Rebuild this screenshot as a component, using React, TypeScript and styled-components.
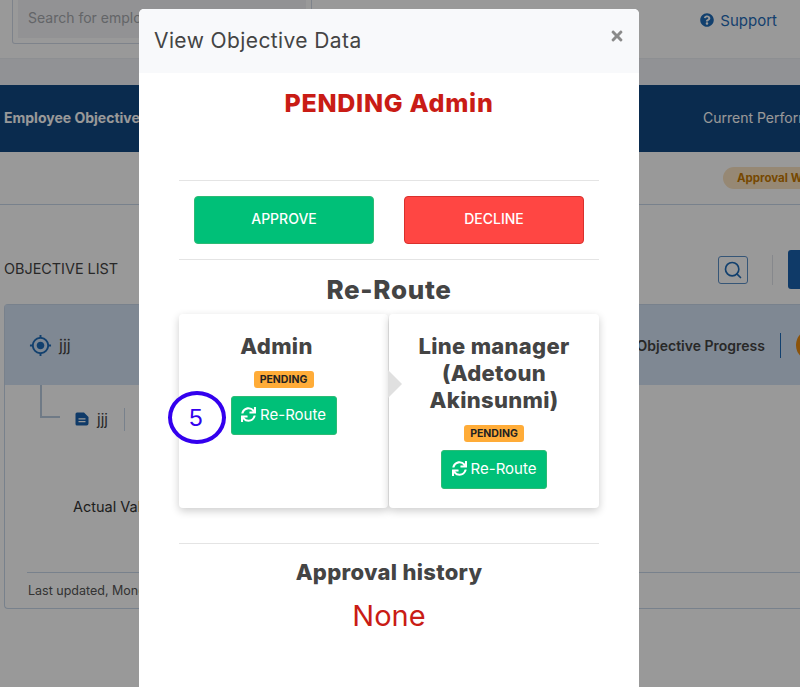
import React from "react";
import styled, { createGlobalStyle } from "styled-components";
import { FaQuestionCircle, FaSync, FaTimes } from "react-icons/fa";
import { MdGpsFixed } from "react-icons/md";
import { FiSearch } from "react-icons/fi";

const GlobalStyle = createGlobalStyle`
  html, body {
    margin: 0;
    padding: 0;
    background: #fff;
    font-family: Inter, "Liberation Sans", sans-serif;
    color: #444;
  }
  * { box-sizing: border-box; }
`;

const Page = styled.div`
  position: relative;
  width: 800px;
  height: 687px;
  overflow: hidden;
  background: #fff;
`;

/* page behind the modal */
const TopBar = styled.div`
  height: 58px;
  display: flex;
  justify-content: space-between;
  padding: 0 23px 0 12px;
`;

const SearchBox = styled.div`
  width: 300px;
  height: 44px;
  border: 1px solid #d3dbe8;
  border-top: 0;
  border-radius: 0 0 3px 3px;
  padding: 0 5px 5px;
`;

const SearchField = styled.div`
  height: 38px;
  background: #f3f4f7;
  color: #a6a8ad;
  font-size: 14px;
  padding: 9px 10px 0;
  white-space: nowrap;
`;

const SupportLink = styled.div`
  display: flex;
  align-items: center;
  gap: 6px;
  height: 40px;
  color: #1f6cb8;
  font-size: 15px;
`;

const Strip = styled.div`
  height: 27px;
  background: #f2f3f8;
  border-top: 1px solid #eceef3;
`;

const Band = styled.div`
  height: 67px;
  background: #124882;
  display: flex;
  align-items: center;
  justify-content: space-between;
  padding: 0 0 2px 4px;
  color: #fff;
  font-size: 14px;
  white-space: nowrap;
`;

const BandBold = styled.span`
  font-weight: 700;
`;

const BandLight = styled.span`
  width: 97px;
  overflow: hidden;
`;

const StatusRow = styled.div`
  height: 53px;
  border-bottom: 1px solid #c9d8ea;
  display: flex;
  justify-content: flex-end;
  padding-top: 15px;
`;

const ApprovalPill = styled.div`
  width: 77px;
  height: 22px;
  background: #fbe3c1;
  color: #c67800;
  border-radius: 11px 0 0 11px;
  font-size: 11.5px;
  font-weight: 700;
  padding: 4px 0 0 14px;
  white-space: nowrap;
  overflow: hidden;
`;

const ListHeader = styled.div`
  height: 99px;
  display: flex;
  align-items: flex-end;
  justify-content: space-between;
  padding: 0 0 15px 4px;
`;

const ListTitle = styled.div`
  font-size: 14.4px;
  color: #444;
  padding-bottom: 12px;
`;

const ListTools = styled.div`
  display: flex;
  align-items: center;
`;

const IconButton = styled.div`
  width: 30px;
  height: 28px;
  border: 1px solid #5b8fc7;
  border-radius: 3px;
  color: #1f6cb8;
  display: flex;
  align-items: center;
  justify-content: center;
  margin-right: 24px;
  font-size: 20px;
`;

const ToolDivider = styled.div`
  width: 1px;
  height: 30px;
  background: #dfe3ea;
  margin-right: 15px;
`;

const PrimaryStub = styled.div`
  width: 12px;
  height: 39px;
  background: #1a62ad;
  border-radius: 3px 0 0 3px;
`;

const ObjectiveCard = styled.div`
  margin-left: 4px;
  height: 305px;
  border: 1px solid #c9d8ea;
  border-right: 0;
  border-radius: 4px 0 0 4px;
`;

const ObjectiveHead = styled.div`
  height: 80px;
  background: #d4e3f5;
  display: flex;
  align-items: center;
  justify-content: space-between;
  padding-left: 24px;
`;

const ObjectiveName = styled.div`
  display: flex;
  align-items: center;
  gap: 7px;
  color: #1f6cb8;
  font-size: 23px;
`;

const PlainText = styled.span<{ $size: number }>`
  color: #444;
  font-size: ${(p) => p.$size}px;
`;

const ProgressGroup = styled.div`
  display: flex;
  align-items: center;
`;

const ProgressLabel = styled.span`
  font-size: 14px;
  font-weight: 600;
  color: #444;
  padding-right: 15px;
`;

const ProgressRule = styled.div`
  width: 1px;
  height: 25px;
  background: #1f6cb8;
  margin-right: 15px;
`;

const ProgressDot = styled.div`
  flex: none;
  width: 32px;
  height: 32px;
  margin-right: -28px;
  background: #e88a12;
  border-radius: 50%;
`;

const ChildRow = styled.div`
  height: 99px;
  padding-left: 35px;
  display: flex;
`;

const TreeLine = styled.div`
  width: 20px;
  height: 33px;
  border-left: 2px solid #b9cbe0;
  border-bottom: 2px solid #b9cbe0;
`;

const ChildName = styled.div`
  display: flex;
  align-items: center;
  gap: 8px;
  height: 24px;
  margin: 22px 0 0 15px;
  color: #1a62ad;
`;

const ChildRule = styled.div`
  width: 1px;
  height: 23px;
  background: #c9d8ea;
  margin-left: 8px;
`;

const ActualRow = styled.div`
  height: 89px;
  padding: 14px 0 0 46px;
  margin-left: 22px;
  font-size: 14.5px;
  color: #333;
  border-bottom: 1px solid #c9d8ea;
`;

const UpdatedRow = styled.div`
  font-size: 12.5px;
  color: #555;
  padding: 10px 0 0 23px;
`;

const Backdrop = styled.div`
  position: absolute;
  inset: 0;
  background: rgba(0, 0, 0, 0.4);
`;

/* modal */
const Modal = styled.div`
  position: absolute;
  top: 9px;
  left: 139px;
  width: 500px;
  height: 700px;
  background: #fff;
  border-radius: 5px 5px 0 0;
`;

const ModalHeader = styled.div`
  height: 64px;
  background: #f8f9fb;
  border-radius: 5px 5px 0 0;
  display: flex;
  justify-content: space-between;
  padding: 19px 15px 0;
`;

const ModalTitle = styled.div`
  font-size: 21px;
  line-height: 26px;
  letter-spacing: 0.4px;
  color: #444;
`;

const CloseIcon = styled.div`
  display: flex;
  color: #8a8a8a;
  font-size: 16px;
  line-height: 1;
  margin-right: -1px;
`;

const ModalBody = styled.div`
  padding: 0 40px;
  display: flex;
  flex-direction: column;
  align-items: stretch;
`;

const StatusHeading = styled.h2`
  margin: 15px 0 62px;
  height: 30px;
  font-size: 25px;
  line-height: 30px;
  font-weight: 800;
  letter-spacing: 0.7px;
  color: #c91c15;
  text-align: center;
`;

const Rule = styled.hr`
  margin: 0;
  border: 0;
  border-top: 1px solid #e4e4e4;
`;

const ActionRow = styled.div`
  display: flex;
  justify-content: center;
  gap: 30px;
  padding: 15px 0;
`;

const ActionButton = styled.button<{ $tone: "approve" | "decline" }>`
  width: 180px;
  height: 48px;
  border-radius: 4px;
  border: 1px solid ${(p) => (p.$tone === "approve" ? "#2dbb75" : "#d9302c")};
  background: ${(p) => (p.$tone === "approve" ? "#00c078" : "#ff4643")};
  color: #fff;
  font-family: inherit;
  font-size: 14px;
  font-weight: 500;
  padding: 0 0 3px;
`;

const SectionHeading = styled.h3`
  margin: 14px 0 8px;
  height: 32px;
  font-size: 26px;
  line-height: 32px;
  font-weight: 800;
  letter-spacing: 0.7px;
  color: #444;
  text-align: center;
`;

const Approvers = styled.div`
  display: flex;
  gap: 1px;
`;

const ApproverCard = styled.div`
  position: relative;
  flex: 1;
  height: 194px;
  border-radius: 4px;
  background: #fff;
  box-shadow: 0 3px 8px rgba(0, 0, 0, 0.2);
  padding: 19px 20px 0;
  display: flex;
  flex-direction: column;
  align-items: center;
  text-align: center;

  &:first-child {
    flex: 0 0 209px;
  }
`;

const ArrowTip = styled.div`
  position: absolute;
  z-index: 1;
  top: 56px;
  left: 100%;
  width: 0;
  height: 0;
  border-left: 14px solid #e0e0e0;
  border-top: 14px solid transparent;
  border-bottom: 14px solid transparent;
`;

const ApproverName = styled.div<{ $inset: number }>`
  font-size: 22px;
  line-height: 27px;
  font-weight: 800;
  letter-spacing: 0.3px;
  color: #444;
  padding-right: ${(p) => p.$inset}px;
`;

const PendingBadge = styled.span`
  width: 60px;
  height: 17px;
  margin-top: 11px;
  border-radius: 3px;
  background: #ffac38;
  color: #222;
  font-size: 10.5px;
  line-height: 17px;
  font-weight: 700;
`;

const RerouteButton = styled.button`
  width: 106px;
  height: 39px;
  margin-top: 8px;
  border: 1px solid #2dbb75;
  border-radius: 3px;
  background: #00c078;
  color: #fff;
  font-family: inherit;
  font-size: 15px;
  display: flex;
  align-items: center;
  justify-content: center;
  gap: 4px;
  padding: 0 0 2px;
`;

const HistoryRule = styled(Rule)`
  margin-top: 35px;
`;

const HistoryHeading = styled.h4`
  margin: 15px 0 0;
  height: 27px;
  font-size: 22px;
  line-height: 27px;
  font-weight: 800;
  letter-spacing: 0.3px;
  color: #444;
  text-align: center;
`;

const NoneText = styled.div`
  margin-top: 10px;
  font-size: 29px;
  line-height: 40px;
  color: #c91c15;
  text-align: center;
`;

/* step marker drawn on top of the screenshot */
const StepMarker = styled.div`
  position: absolute;
  left: 168px;
  top: 391px;
  width: 58px;
  height: 53px;
  border: 4px solid #3300ee;
  border-radius: 50%;
  background: #fff;
  color: #3300ee;
  font-family: "Liberation Sans", Arial, sans-serif;
  font-size: 24px;
  padding-right: 2px;
  display: flex;
  align-items: center;
  justify-content: center;
`;

function DocIcon() {
  return (
    <svg width="14" height="14" viewBox="0 0 14 14" fill="currentColor">
      <path
        fillRule="evenodd"
        d="M2 0.5H9L13.5 5V11.5a2 2 0 0 1-2 2H2a1.5 1.5 0 0 1-1.5-1.5V2A1.5 1.5 0 0 1 2 0.5ZM3.5 6.2V7.4H10.5V6.2ZM3.5 9V10.2H10.5V9Z"
      />
    </svg>
  );
}

const approvers = [
  { name: "Admin", arrow: true, inset: 14 },
  { name: "Line manager (Adetoun Akinsunmi)", arrow: false, inset: 0 },
];

export default function App() {
  return (
    <Page>
      <GlobalStyle />
      <TopBar>
        <SearchBox>
          <SearchField>Search for employee</SearchField>
        </SearchBox>
        <SupportLink>
          <FaQuestionCircle size={14} />
          Support
        </SupportLink>
      </TopBar>
      <Strip />
      <Band>
        <BandBold>Employee Objectives</BandBold>
        <BandLight>Current Performance</BandLight>
      </Band>
      <StatusRow>
        <ApprovalPill>Approval Workflow</ApprovalPill>
      </StatusRow>
      <ListHeader>
        <ListTitle>OBJECTIVE LIST</ListTitle>
        <ListTools>
          <IconButton>
            <FiSearch />
          </IconButton>
          <ToolDivider />
          <PrimaryStub />
        </ListTools>
      </ListHeader>
      <ObjectiveCard>
        <ObjectiveHead>
          <ObjectiveName>
            <MdGpsFixed />
            <PlainText $size={16}>jjj</PlainText>
          </ObjectiveName>
          <ProgressGroup>
            <ProgressLabel>Objective Progress</ProgressLabel>
            <ProgressRule />
            <ProgressDot />
          </ProgressGroup>
        </ObjectiveHead>
        <ChildRow>
          <TreeLine />
          <ChildName>
            <DocIcon />
            <PlainText $size={15}>jjj</PlainText>
            <ChildRule />
          </ChildName>
        </ChildRow>
        <ActualRow>Actual Value</ActualRow>
        <UpdatedRow>Last updated, Monday</UpdatedRow>
      </ObjectiveCard>

      <Backdrop />

      <Modal>
        <ModalHeader>
          <ModalTitle>View Objective Data</ModalTitle>
          <CloseIcon>
            <FaTimes />
          </CloseIcon>
        </ModalHeader>
        <ModalBody>
          <StatusHeading>PENDING Admin</StatusHeading>
          <Rule />
          <ActionRow>
            <ActionButton $tone="approve">APPROVE</ActionButton>
            <ActionButton $tone="decline">DECLINE</ActionButton>
          </ActionRow>
          <Rule />
          <SectionHeading>Re-Route</SectionHeading>
          <Approvers>
            {approvers.map((a) => (
              <ApproverCard key={a.name}>
                <ApproverName $inset={a.inset}>{a.name}</ApproverName>
                <PendingBadge>PENDING</PendingBadge>
                <RerouteButton>
                  <FaSync size={15} />
                  Re-Route
                </RerouteButton>
                {a.arrow && <ArrowTip />}
              </ApproverCard>
            ))}
          </Approvers>
          <HistoryRule />
          <HistoryHeading>Approval history</HistoryHeading>
          <NoneText>None</NoneText>
        </ModalBody>
      </Modal>

      <StepMarker>5</StepMarker>
    </Page>
  );
}
